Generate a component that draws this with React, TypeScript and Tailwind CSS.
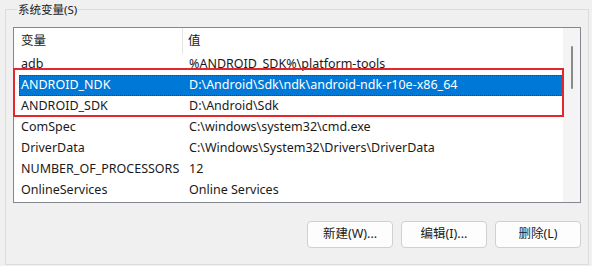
import React from 'react'

const rows = [
  { name: 'adb', value: '%ANDROID_SDK%\\platform-tools' },
  { name: 'ANDROID_NDK', value: 'D:\\Android\\Sdk\\ndk\\android-ndk-r10e-x86_64', selected: true },
  { name: 'ANDROID_SDK', value: 'D:\\Android\\Sdk' },
  { name: 'ComSpec', value: 'C:\\windows\\system32\\cmd.exe' },
  { name: 'DriverData', value: 'C:\\Windows\\System32\\Drivers\\DriverData' },
  { name: 'NUMBER_OF_PROCESSORS', value: '12' },
  { name: 'OnlineServices', value: 'Online Services' },
]

function Button({ label }: { label: string }) {
  return (
    <button className="w-[86px] h-[27px] rounded-[4px] border border-[#d0d0d0] bg-[#fdfdfd] text-[12.5px] text-[#1b1b1b] leading-none">
      {label}
    </button>
  )
}

export default function App() {
  return (
    <div
      className="relative w-[592px] h-[266px] bg-[#f0f0f0] text-[#1a1a1a] overflow-hidden"
      style={{ fontFamily: '"Noto Sans", "Noto Sans CJK SC", sans-serif' }}
    >
      <fieldset className="ml-[5px] mr-[3px] h-[265px] border border-[#dcdcdc] px-[7px] pb-[16px]">
        <legend className="ml-[4px] px-px text-[11.5px] leading-[19px] text-[#1a1a1a]">系统变量(S)</legend>

        {/* list */}
        <div className="mt-[8px] h-[176px] border border-[#828790] bg-white flex">
          <div className="flex-1 flex flex-col text-[12.5px]">
            <div className="flex h-[26px] items-center">
              <div className="w-[169px] pl-[7px] h-full flex items-center border-r border-[#e5e5e5]">变量</div>
              <div className="pl-[5px]">值</div>
            </div>
            {rows.map((r) => (
              <div
                key={r.name}
                className={
                  'flex h-[21px] items-center ml-[5px] ' +
                  (r.selected ? 'bg-[#0078d7] text-white outline outline-1 outline-dotted outline-[#0a4f8a] -outline-offset-1' : '')
                }
              >
                <div className="w-[164px] pl-[2px] whitespace-nowrap">{r.name}</div>
                <div className="pl-[6px] whitespace-nowrap">{r.value}</div>
              </div>
            ))}
          </div>
          <div className="w-[17px] bg-[#f4f4f4] flex justify-center pt-[18px]">
            <div className="w-[2px] h-[43px] bg-[#8a8a8a] rounded-full" />
          </div>
        </div>

        <div className="flex justify-end gap-[8px] mt-[18px]">
          <Button label="新建(W)..." />
          <Button label="编辑(I)..." />
          <Button label="删除(L)" />
        </div>
      </fieldset>

      {/* red highlight annotation */}
      <div className="absolute left-[13px] top-[68px] w-[551px] h-[49px] border-2 border-[#e5262b] pointer-events-none" />
    </div>
  )
}
